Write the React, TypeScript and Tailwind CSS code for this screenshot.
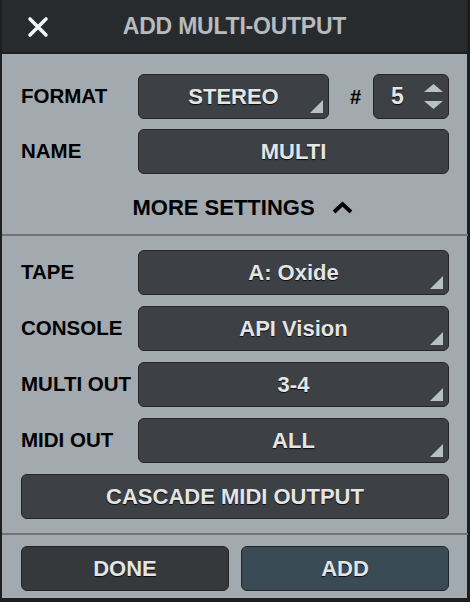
import React from 'react';

const FONT = { fontFamily: '"Liberation Sans", Arial, Helvetica, sans-serif' };

function Corner() {
  return (
    <svg className="absolute right-[5px] bottom-[5px]" width="13" height="13" viewBox="0 0 13 13">
      <polygon points="13,0 13,13 0,13" fill="#b8c0c7" />
    </svg>
  );
}

function Field({ value, menu = true, className = '' }: { value: string; menu?: boolean; className?: string }) {
  return (
    <div
      className={`relative flex h-[45px] items-center justify-center rounded-[6px] border-[1.5px] border-[#222427] bg-[#3d4044] text-[22px] font-bold text-[#e4e5e6] [text-shadow:0_1px_1px_rgba(0,0,0,0.85)] ${className}`}
    >
      {value}
      {menu && <Corner />}
    </div>
  );
}

function Row({ label, value, menu = true }: { label: string; value: string; menu?: boolean }) {
  return (
    <div className="flex items-center">
      <div className="w-[117px] shrink-0 text-[20.5px] font-bold text-black">{label}</div>
      <Field value={value} menu={menu} className="flex-1" />
    </div>
  );
}

export default function App() {
  return (
    <div style={FONT} className="flex h-[602px] w-[470px] flex-col bg-[#1c1e20] pr-[3px] pb-[4px] pl-[2px]">
      {/* title bar */}
      <div className="relative flex h-[52px] shrink-0 items-center justify-center bg-[#282b2e]">
        <svg className="absolute top-[16px] left-[25px]" width="22" height="22" viewBox="0 0 22 22">
          <path d="M3 3 L19 19 M19 3 L3 19" stroke="#eef5f5" strokeWidth="3.6" strokeLinecap="round" />
        </svg>
        <span className="text-[23px] font-bold tracking-[-0.01em] text-[#b7bbbe]">ADD MULTI-OUTPUT</span>
      </div>

      {/* body */}
      <div className="mt-[2px] flex flex-1 flex-col bg-[#a3aaaf] pt-[20px] pr-[18px] pl-[19px]">
        <div className="flex flex-col gap-[10px]">
          <div className="flex items-center">
            <div className="w-[117px] shrink-0 text-[20.5px] font-bold text-black">FORMAT</div>
            <Field value="STEREO" className="w-[191px]" />
            <div className="ml-[21px] w-[12px] text-[20px] font-bold text-black">#</div>
            <div className="relative ml-[11px] flex h-[45px] w-[76px] items-center rounded-[6px] border-[1.5px] border-[#222427] bg-[#3d4044] pl-[17px] text-[23px] font-bold text-[#e4e5e6] [text-shadow:0_1px_1px_rgba(0,0,0,0.85)]">
              5
              <svg className="absolute top-[9px] right-[5px]" width="19" height="25" viewBox="0 0 19 25">
                <polygon points="9.5,0 19,8 0,8" fill="#b8c2c9" />
                <polygon points="0,17 19,17 9.5,25" fill="#b8c2c9" />
              </svg>
            </div>
          </div>
          <Row label="NAME" value="MULTI" menu={false} />
        </div>

        <div className="flex h-[60px] items-center justify-center pt-[6px] pl-[16px] text-[22px] font-bold text-black">
          <span>MORE SETTINGS</span>
          <svg className="ml-[16px]" width="23" height="15" viewBox="0 0 23 15">
            <path d="M3 12 L11.5 4 L20 12" fill="none" stroke="#000" strokeWidth="3.8" strokeLinejoin="miter" />
          </svg>
        </div>

        <div className="-mx-[19px] border-t-2 border-[#6e7479]" />

        <div className="mt-[14px] flex flex-col gap-[11px]">
          <Row label="TAPE" value="A: Oxide" />
          <Row label="CONSOLE" value="API Vision" />
          <Row label="MULTI OUT" value="3-4" />
          <Row label="MIDI OUT" value="ALL" />
          <Field value="CASCADE MIDI OUTPUT" menu={false} />
        </div>

        <div className="-mx-[19px] mt-[14px] border-t-2 border-[#6e7479]" />

        <div className="mt-[11px] flex gap-[12px]">
          <Field value="DONE" menu={false} className="flex-1 !bg-[#36393c]" />
          <Field value="ADD" menu={false} className="flex-1 !bg-[#3b4b56]" />
        </div>
      </div>
    </div>
  );
}
